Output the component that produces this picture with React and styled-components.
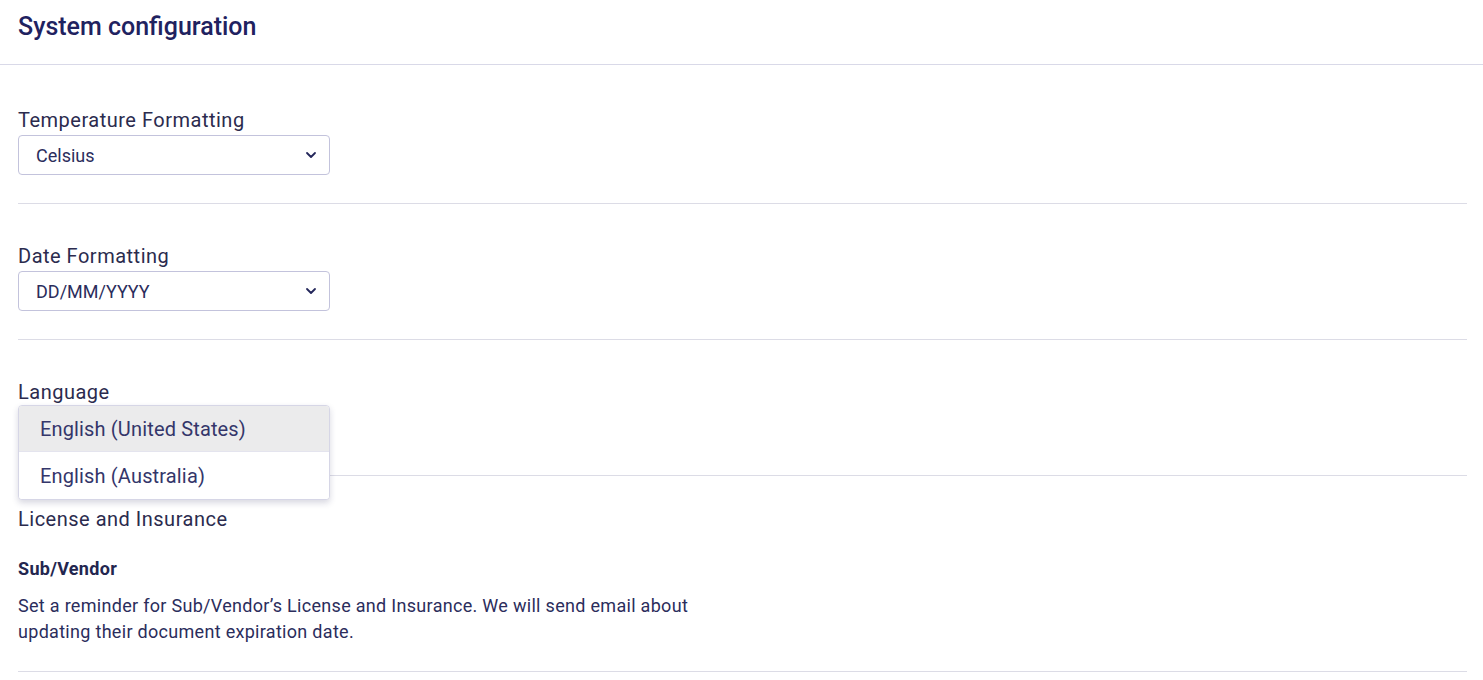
import React from "react";
import styled, { createGlobalStyle } from "styled-components";

const GlobalStyle = createGlobalStyle`
	body {
		margin: 0;
		background: #fff;
		font-family: Roboto, "Liberation Sans", sans-serif;
		color: #2b2d5c;
	}
`;

const ChevronIcon = () => (
	<svg width="12" height="8" viewBox="0 0 12 8" fill="none">
		<path d="M2 2l4 4 4-4" stroke="#23265a" strokeWidth="1.8" strokeLinecap="round" strokeLinejoin="round" />
	</svg>
);

const Select = ({ value }) => (
	<SelectBox>
		<span>{value}</span>
		<ChevronIcon />
	</SelectBox>
);

const App = () => {
	const languages = ["English (United States)", "English (Australia)"];

	return (
		<Page>
			<GlobalStyle />
			<Header>
				<Title>System configuration</Title>
			</Header>
			<Content>
				<Section top={43}>
					<Label>Temperature Formatting</Label>
					<Select value="Celsius" />
				</Section>
				<Section>
					<Label>Date Formatting</Label>
					<Select value="DD/MM/YYYY" />
				</Section>
				<Section>
					<Label>Language</Label>
					<SelectWrap>
						<Select value="English (United States)" />
						<Menu>
							{languages.map((lang, i) => (
								<MenuItem key={lang} active={i === 0}>
									{lang}
								</MenuItem>
							))}
						</Menu>
					</SelectWrap>
				</Section>
				<Section top={31} bottom={26}>
					<Label>License and Insurance</Label>
					<SubTitle>Sub/Vendor</SubTitle>
					<Description>
						Set a reminder for Sub/Vendor’s License and Insurance. We will send email about
						updating their document expiration date.
					</Description>
				</Section>
			</Content>
		</Page>
	);
};

const Page = styled.div`
	width: 100%;
	min-height: 680px;
	background: #fff;
`;

const Header = styled.div`
	height: 65px;
	display: flex;
	align-items: center;
	padding: 0 18px;
	border-bottom: 1px solid #d9d9e8;
	box-sizing: border-box;
`;

const Title = styled.h1`
	margin: 0 0 12px;
	font-size: 25px;
	font-weight: 500;
	color: #1f2260;
`;

const Content = styled.div`
	padding: 0 16px 0 18px;
`;

const Section = styled.div`
	padding-top: ${(p) => p.top ?? 40}px;
	padding-bottom: ${(p) => p.bottom ?? 28}px;
	border-bottom: 1px solid #dcdce6;
`;

const Label = styled.div`
	font-size: 20px;
	line-height: 24px;
	letter-spacing: 0.5px;
	color: #2b2b4e;
	margin-bottom: 3px;
`;

const SelectWrap = styled.div`
	position: relative;
	width: 312px;
`;

const SelectBox = styled.div`
	width: 312px;
	height: 40px;
	box-sizing: border-box;
	border: 1px solid #c3c3dc;
	border-radius: 4px;
	display: flex;
	align-items: center;
	justify-content: space-between;
	padding: 0 12px 0 17px;
	font-size: 18px;
	color: #2b2d5c;
`;

const Menu = styled.div`
	position: absolute;
	top: -2px;
	left: 0;
	width: 312px;
	box-sizing: border-box;
	background: #fff;
	border: 1px solid #d6d6e6;
	border-radius: 4px;
	box-shadow: 0 3px 6px rgba(40, 40, 90, 0.18);
	overflow: hidden;
`;

const MenuItem = styled.div`
	height: ${(p) => (p.active ? "45px" : "47px")};
	display: flex;
	align-items: center;
	padding: 0 21px;
	font-size: 20px;
	letter-spacing: 0.15px;
	color: #34366a;
	background: ${(p) => (p.active ? "#ebebec" : "#fff")};
	border-bottom: ${(p) => (p.active ? "1px solid #e4e4ee" : "none")};
`;

const SubTitle = styled.div`
	margin-top: 27px;
	font-size: 18px;
	line-height: 22px;
	font-weight: 700;
	letter-spacing: 0.3px;
	color: #23264f;
`;

const Description = styled.p`
	margin: 13px 0 0;
	max-width: 700px;
	font-size: 18px;
	line-height: 26px;
	letter-spacing: 0.3px;
	color: #2b2d5c;
`;

export default App;
